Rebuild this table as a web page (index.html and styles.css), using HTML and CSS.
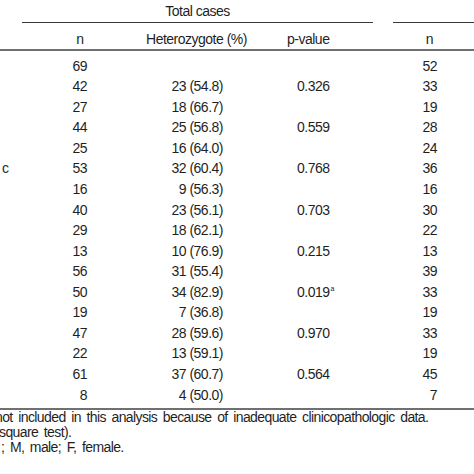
FILE: index.html
```html
<!DOCTYPE html>
<html>
<head>
<meta charset="utf-8">
<link rel="stylesheet" href="styles.css">
</head>
<body>
<div class="tbl">
  <div class="grid top">
    <div class="span-total">Total cases</div>
    <div class="right-line"></div>
  </div>
  <div class="grid head">
    <div class="lab"></div>
    <div class="c-n h-n">n</div>
    <div class="c-het h-het">Heterozygote (%)</div>
    <div class="c-p h-p">p-value</div>
    <div class="c-n2 h-n2">n</div>
  </div>
  <div class="body">
    <div class="grid row"><div class="lab"></div><div class="c-n">69</div><div class="c-het"></div><div class="c-p"></div><div class="c-n2">52</div></div>
    <div class="grid row"><div class="lab"></div><div class="c-n">42</div><div class="c-het">23 (54.8)</div><div class="c-p">0.326</div><div class="c-n2">33</div></div>
    <div class="grid row"><div class="lab"></div><div class="c-n">27</div><div class="c-het">18 (66.7)</div><div class="c-p"></div><div class="c-n2">19</div></div>
    <div class="grid row"><div class="lab"></div><div class="c-n">44</div><div class="c-het">25 (56.8)</div><div class="c-p">0.559</div><div class="c-n2">28</div></div>
    <div class="grid row"><div class="lab"></div><div class="c-n">25</div><div class="c-het">16 (64.0)</div><div class="c-p"></div><div class="c-n2">24</div></div>
    <div class="grid row"><div class="lab">c</div><div class="c-n">53</div><div class="c-het">32 (60.4)</div><div class="c-p">0.768</div><div class="c-n2">36</div></div>
    <div class="grid row"><div class="lab"></div><div class="c-n">16</div><div class="c-het">9 (56.3)</div><div class="c-p"></div><div class="c-n2">16</div></div>
    <div class="grid row"><div class="lab"></div><div class="c-n">40</div><div class="c-het">23 (56.1)</div><div class="c-p">0.703</div><div class="c-n2">30</div></div>
    <div class="grid row"><div class="lab"></div><div class="c-n">29</div><div class="c-het">18 (62.1)</div><div class="c-p"></div><div class="c-n2">22</div></div>
    <div class="grid row"><div class="lab"></div><div class="c-n">13</div><div class="c-het">10 (76.9)</div><div class="c-p">0.215</div><div class="c-n2">13</div></div>
    <div class="grid row"><div class="lab"></div><div class="c-n">56</div><div class="c-het">31 (55.4)</div><div class="c-p"></div><div class="c-n2">39</div></div>
    <div class="grid row"><div class="lab"></div><div class="c-n">50</div><div class="c-het">34 (82.9)</div><div class="c-p">0.019<sup class="sup">a</sup></div><div class="c-n2">33</div></div>
    <div class="grid row"><div class="lab"></div><div class="c-n">19</div><div class="c-het">7 (36.8)</div><div class="c-p"></div><div class="c-n2">19</div></div>
    <div class="grid row"><div class="lab"></div><div class="c-n">47</div><div class="c-het">28 (59.6)</div><div class="c-p">0.970</div><div class="c-n2">33</div></div>
    <div class="grid row"><div class="lab"></div><div class="c-n">22</div><div class="c-het">13 (59.1)</div><div class="c-p"></div><div class="c-n2">19</div></div>
    <div class="grid row"><div class="lab"></div><div class="c-n">61</div><div class="c-het">37 (60.7)</div><div class="c-p">0.564</div><div class="c-n2">45</div></div>
    <div class="grid row"><div class="lab"></div><div class="c-n">8</div><div class="c-het">4 (50.0)</div><div class="c-p"></div><div class="c-n2">7</div></div>
  </div>
  <div class="notes">
    <p class="note n1">not included in this analysis because of inadequate clinicopathologic data.</p>
    <p class="note n2">square test).</p>
    <p class="note n3">; M, male; F, female.</p>
  </div>
</div>
</body>
</html>
```
FILE: styles.css
```css
html, body {
  margin: 0;
  padding: 0;
  background: #ffffff;
}
body {
  width: 474px;
  height: 474px;
  overflow: hidden;
  font-family: "Liberation Sans", Arial, sans-serif;
  font-size: 14px;
  letter-spacing: -0.5px;
  color: #1f1f1f;
}
.tbl {
  width: 474px;
}
.grid {
  display: grid;
  grid-template-columns: 22px 78px 180px 94px 100px;
}
.top {
  height: 23px;
}
.span-total {
  grid-column: 2 / 5;
  line-height: 22px;
  text-align: center;
  border-bottom: 1px solid #3a3a3a;
  margin-right: 1px;
}
.right-line {
  grid-column: 5 / 6;
  margin-left: 19px;
  border-bottom: 1px solid #3a3a3a;
  height: 22px;
}
.head {
  padding-top: 6px;
  line-height: 20px;
  border-bottom: 2px solid #707070;
}
.body {
  padding-top: 4.75px;
  padding-bottom: 2.7px;
  border-bottom: 2px solid #707070;
}
.row {
  line-height: 20.56px;
  height: 20.56px;
}
.lab {
  white-space: nowrap;
  padding-left: 2px;
}
.c-n {
  text-align: right;
  padding-right: 13px;
}
.c-het {
  text-align: right;
  padding-right: 57px;
}
.c-p {
  text-align: left;
  padding-left: 17px;
}
.c-n2 {
  text-align: right;
  padding-right: 37px;
}
.h-n {
  text-align: center;
  padding-left: 38px;
  padding-right: 0;
}
.h-het {
  text-align: center;
  padding-left: 13px;
  padding-right: 0;
}
.h-p {
  padding-left: 7px;
}
.h-n2 {
  padding-right: 41px;
}
.sup {
  font-size: 7px;
  letter-spacing: 0;
  vertical-align: 6px;
  line-height: 0;
  margin-left: 1px;
}
.notes {
  padding-top: 0.5px;
}
.note {
  margin: 0;
  line-height: 15px;
  white-space: nowrap;
  letter-spacing: -0.6px;
  word-spacing: 2.3px;
}
.n1 {
  text-indent: -5px;
}
.n2 {
  text-indent: -1px;
}
.n3 {
  text-indent: 1px;
}
```
